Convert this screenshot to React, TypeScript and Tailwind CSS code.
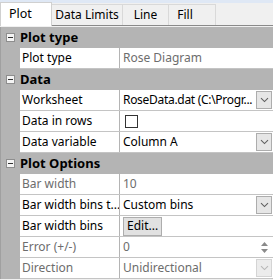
import React from "react";

const tabs = ["Plot", "Data Limits", "Line", "Fill"];

function Chevron({ disabled }: { disabled?: boolean }) {
	return (
		<div
			className={`ml-auto mr-[1px] flex h-[18px] w-[16px] shrink-0 items-center justify-center border ${
				disabled ? "border-[#d4d4d4] bg-[#ececec]" : "border-[#adadad] bg-[#e6e6e6]"
			}`}
		>
			<svg width="9" height="6" viewBox="0 0 9 6" aria-hidden="true">
				<path d="M1 1.2 L4.5 4.6 L8 1.2" fill="none" stroke={disabled ? "#b8b8b8" : "#606060"} strokeWidth="1.1" />
			</svg>
		</div>
	);
}

function Spinner() {
	return (
		<div className="ml-auto mr-[2px] flex h-[18px] w-[14px] flex-col items-center justify-center gap-[3px]">
			<svg width="7" height="4" viewBox="0 0 7 4" aria-hidden="true">
				<path d="M0 4 L3.5 0 L7 4 Z" fill="#8a8a8a" />
			</svg>
			<svg width="7" height="4" viewBox="0 0 7 4" aria-hidden="true">
				<path d="M0 0 L3.5 4 L7 0 Z" fill="#8a8a8a" />
			</svg>
		</div>
	);
}

function Category({ title }: { title: string }) {
	return (
		<div className="flex h-[21px] items-center bg-[#b4b4b4]">
			<div className="flex w-[19px] items-center justify-center">
				<div className="flex h-[9px] w-[9px] items-center justify-center border border-[#8e8e8e] bg-[#f4f4f4]">
					<div className="h-[1px] w-[5px] bg-[#333]" />
				</div>
			</div>
			<span className="text-[13px] font-bold text-black">{title}</span>
		</div>
	);
}

function Row({
	name,
	children,
	disabled,
}: {
	name: string;
	children?: React.ReactNode;
	disabled?: boolean;
}) {
	return (
		<div className="flex h-[21px]">
			<div className="w-[19px] shrink-0 bg-[#b4b4b4]" />
			<div className="flex flex-1 border-b border-[#c4c4c4] bg-white">
				<div
					className={`flex w-[100px] shrink-0 items-center overflow-hidden whitespace-nowrap border-r border-[#b4b4b4] pl-[2px] ${
						disabled ? "text-[#6d6d6d]" : "text-black"
					}`}
				>
					{name}
				</div>
				<div className="flex min-w-0 flex-1 items-center pl-[3px]">{children}</div>
			</div>
		</div>
	);
}

export default function App() {
	return (
		<div className="h-[280px] w-[273px] overflow-hidden bg-[#f0f0f0] text-[12px] leading-none" style={{ fontFamily: '"Noto Sans", "Open Sans", sans-serif' }}>
			<div className="h-[3px] bg-[#dfe8f5]" />
			<div className="flex h-[23px] items-end border-b border-[#8a8a8a]">
				{tabs.map((t, i) =>
					i === 0 ? (
						<div key={t} className="-mb-[1px] flex h-[24px] w-[52px] items-center border border-b-0 border-[#d0d0d0] bg-white pl-[8px] text-[12.5px]">
							{t}
						</div>
					) : (
						<div
							key={t}
							className={`flex h-[21px] items-center justify-center border border-l-0 border-b-0 border-[#d9d9d9] bg-[#f0f0f0] text-[12px] ${
								i === 1 ? "w-[71px]" : i === 2 ? "w-[46px]" : "w-[47px]"
							}`}
						>
							<span className={i === 3 ? "-ml-[14px]" : ""}>{t}</span>
						</div>
					),
				)}
			</div>
			<div className="mt-[1px] border-l border-[#a0a0a0]">
				<Category title="Plot type" />
				<Row name="Plot type">
					<span className="text-[#6d6d6d]">Rose Diagram</span>
				</Row>
				<Category title="Data" />
				<Row name="Worksheet">
					<span className="whitespace-nowrap tracking-[-0.3px]">RoseData.dat (C:\Progr...</span>
					<Chevron />
				</Row>
				<Row name="Data in rows">
					<div className="ml-[2px] h-[13px] w-[13px] border border-[#333] bg-white" />
				</Row>
				<Row name="Data variable">
					<span>Column A</span>
					<Chevron />
				</Row>
				<Category title="Plot Options" />
				<Row name="Bar width" disabled>
					<span className="text-[#6d6d6d]">10</span>
				</Row>
				<Row name="Bar width bins t...">
					<span>Custom bins</span>
					<Chevron />
				</Row>
				<Row name="Bar width bins">
					<div className="flex h-[19px] items-center border border-[#adadad] bg-[#e1e1e1] px-[3px]">Edit...</div>
				</Row>
				<Row name="Error (+/-)" disabled>
					<span className="text-[#6d6d6d]">0</span>
					<Spinner />
				</Row>
				<Row name="Direction" disabled>
					<span className="text-[#6d6d6d]">Unidirectional</span>
					<Chevron disabled />
				</Row>
			</div>
		</div>
	);
}
